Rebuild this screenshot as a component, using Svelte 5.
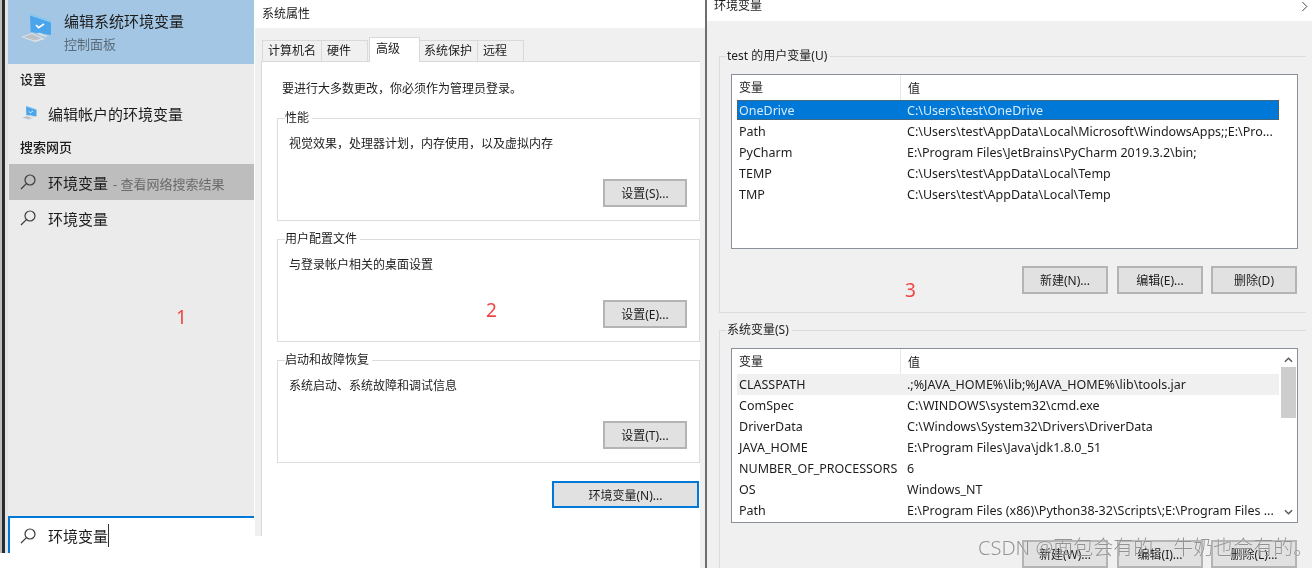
<script>
  const tabs = [
    { label: '计算机名', cls: 'w60' },
    { label: '硬件', cls: 'w46' },
    { label: '高级', cls: 'active' },
    { label: '系统保护', cls: 'w58' },
    { label: '远程', cls: 'w46' }
  ];
  const groups = [
    { title: '性能', text: '视觉效果，处理器计划，内存使用，以及虚拟内存', btn: '设置(S)...' },
    { title: '用户配置文件', text: '与登录帐户相关的桌面设置', btn: '设置(E)...' },
    { title: '启动和故障恢复', text: '系统启动、系统故障和调试信息', btn: '设置(T)...' }
  ];
  const userVars = [
    ['OneDrive', 'C:\\Users\\test\\OneDrive'],
    ['Path', 'C:\\Users\\test\\AppData\\Local\\Microsoft\\WindowsApps;;E:\\Pro...'],
    ['PyCharm', 'E:\\Program Files\\JetBrains\\PyCharm 2019.3.2\\bin;'],
    ['TEMP', 'C:\\Users\\test\\AppData\\Local\\Temp'],
    ['TMP', 'C:\\Users\\test\\AppData\\Local\\Temp']
  ];
  const sysVars = [
    ['CLASSPATH', '.;%JAVA_HOME%\\lib;%JAVA_HOME%\\lib\\tools.jar'],
    ['ComSpec', 'C:\\WINDOWS\\system32\\cmd.exe'],
    ['DriverData', 'C:\\Windows\\System32\\Drivers\\DriverData'],
    ['JAVA_HOME', 'E:\\Program Files\\Java\\jdk1.8.0_51'],
    ['NUMBER_OF_PROCESSORS', '6'],
    ['OS', 'Windows_NT'],
    ['Path', 'E:\\Program Files (x86)\\Python38-32\\Scripts\\;E:\\Program Files ...']
  ];
</script>

{#snippet searchIcon()}
  <svg class="search-icon" viewBox="0 0 16 16" width="16" height="16" fill="none" stroke="#3a3a3a" stroke-width="1.2">
    <circle cx="10" cy="6" r="5" />
    <path d="M6.4 9.6 1 15" />
  </svg>
{/snippet}

{#snippet pcIcon(w, h)}
  <svg viewBox="0 0 32 32" width={w} height={h}>
    <path d="M10 2 31 9v14L10.6 20z" fill="#4aa5ea" />
    <path d="M10 2 31 9v1.5L10 3.5z" fill="#8fcbf5" />
    <path d="M16 13l2.6 2.6L24 12" fill="none" stroke="#fff" stroke-width="1.6" />
    <path d="M17 21l3-.3 7 3 .5 1.5-7-1.5z" fill="#d5dde3" />
    <path d="M1 25l11-4 13 6-10 3z" fill="#dfe3e6" />
    <path d="M3.500 25l8.500-3 9.500 4.500-7 2z" fill="#bcc3c8" />
  </svg>
{/snippet}

{#snippet list(rows, hot, scroll)}
  <div class="list">
    <div class="cols">
      <div class="head">
        <span class="c1">变量</span>
        <span class="c2">值</span>
      </div>
      {#each rows as r, i}
        <div class="row" class:sel={hot === 'sel' && i === 0} class:hover={hot === 'hover' && i === 0}>
          <span class="c1">{r[0]}</span>
          <span class="c2">{r[1]}</span>
        </div>
      {/each}
    </div>
    {#if scroll}
      <div class="scrollbar">
        <svg viewBox="0 0 10 6" width="9" height="6" fill="none" stroke="#555" stroke-width="1.500"><path d="M1 5l4-4 4 4" /></svg>
        <div class="track"><div class="thumb"></div></div>
        <svg viewBox="0 0 10 6" width="9" height="6" fill="none" stroke="#555" stroke-width="1.500"><path d="M1 1l4 4 4-4" /></svg>
      </div>
    {/if}
  </div>
{/snippet}

<div class="app">
  <section class="search-col">
    <div class="edge"></div>
    <div class="search-main">
      <div class="best">
        <div class="best-icon">{@render pcIcon(32, 32)}</div>
        <div class="best-text">
          <div class="best-title">编辑系统环境变量</div>
          <div class="best-sub">控制面板</div>
        </div>
      </div>
      <div class="sec sec-a">设置</div>
      <div class="item item-a">
        <span class="item-icon">{@render pcIcon(16, 16)}</span>
        <span>编辑帐户的环境变量</span>
      </div>
      <div class="sec sec-b">搜索网页</div>
      <div class="item web hot">
        {@render searchIcon()}
        <span>环境变量<em>- 查看网络搜索结果</em></span>
      </div>
      <div class="item web">
        {@render searchIcon()}
        <span>环境变量</span>
      </div>
      <div class="fill"></div>
      <div class="searchbox">
        {@render searchIcon()}
        <span>环境变量</span><i class="caret"></i>
      </div>
    </div>
  </section>

  <section class="sys-col">
    <div class="titlebar sys-title">系统属性</div>
    <div class="sys-body">
      <div class="tabs">
        {#each tabs as t}
          <div class="tab {t.cls}">{t.label}</div>
        {/each}
      </div>
      <div class="tabpanel">
        <p class="notice">要进行大多数更改，你必须作为管理员登录。</p>
        {#each groups as g}
          <fieldset class="grp">
            <legend>{g.title}</legend>
            <p>{g.text}</p>
            <div class="grp-btn"><button>{g.btn}</button></div>
          </fieldset>
        {/each}
        <div class="env-row"><button class="env">环境变量(N)...</button></div>
      </div>
    </div>
    <div class="sys-foot"></div>
  </section>

  <section class="env-col">
    <div class="titlebar env-title">
      <span>环境变量</span>
      <svg viewBox="0 0 6 12" width="6" height="11" fill="none" stroke="#333" stroke-width="1"><path d="M0 1l5 5-5 5" /></svg>
    </div>
    <div class="env-body">
      <fieldset class="box box-user">
        <legend>test 的用户变量(U)</legend>
        {@render list(userVars, 'sel', false)}
        <div class="btns">
          <button>新建(N)...</button><button>编辑(E)...</button><button>删除(D)</button>
        </div>
      </fieldset>
      <fieldset class="box box-sys">
        <legend>系统变量(S)</legend>
        {@render list(sysVars, 'hover', true)}
        <div class="btns">
          <button>新建(W)...</button><button>编辑(I)...</button><button>删除(L)...</button>
        </div>
      </fieldset>
    </div>
  </section>

  <span class="mark m1">1</span>
  <span class="mark m2">2</span>
  <span class="mark m3">3</span>
  <span class="watermark">CSDN @面包会有的，牛奶也会有的。</span>
</div>

<style>
  :global(body) {
    margin: 0;
    background: #fff;
  }
  .app {
    position: relative;
    width: 1312px;
    height: 568px;
    overflow: hidden;
    display: flex;
    background: #fff;
    color: #1c1c1c;
    font-family: "Noto Sans", "Noto Sans CJK SC", sans-serif;
    font-size: 12px;
    filter: blur(0.3px);
  }
  p { margin: 0; }
  button {
    font: inherit;
    color: inherit;
    padding: 0;
    background: #e1e1e1;
    border: 2px solid #b4b4b4;
    box-sizing: border-box;
  }

  /* search panel */
  .search-col {
    flex: 0 0 255px;
    height: 553px;
    display: flex;
  }
  .edge {
    flex: 0 0 8px;
    box-sizing: border-box;
    background: #e4e4e4;
    border-left: 2px solid #bdbdbd;
    box-shadow: inset 3px 0 0 #2b2b2b;
  }
  .search-main {
    flex: 1;
    background: #ebebeb;
    margin-right: 1px;
    display: flex;
    flex-direction: column;
  }
  .best {
    height: 64px;
    flex: none;
    background: #a3c6e4;
    display: flex;
    box-sizing: border-box;
    padding: 12px 0 0 12px;
  }
  .best-icon { width: 44px; }
  .best-title { font-size: 15px; line-height: 18px; }
  .best-sub { font-size: 13px; line-height: 18px; margin-top: 5px; color: #5b6b79; }
  .sec {
    font-size: 13px;
    font-weight: 500;
    padding-left: 12px;
    line-height: 18px;
  }
  .sec-a { margin-top: 6px; }
  .sec-b { margin-top: 7px; }
  .item {
    display: flex;
    align-items: center;
    height: 36px;
    font-size: 15px;
    flex: none;
  }
  .item-a { margin-top: 15px; height: 20px; padding-left: 13px; margin-bottom: 8px; }
  .item-icon { width: 27px; display: flex; }
  .web { padding-left: 12px; gap: 12px; }
  .web.hot { background: #bdbdbd; margin-top: 8px; margin-left: 1px; padding-left: 11px; }
  .web em { font-style: normal; font-size: 13px; color: #6a6a6a; margin-left: 5px; }
  .search-icon { flex: none; }
  .fill { flex: 1; }
  .searchbox {
    flex: none;
    height: 37px;
    box-sizing: border-box;
    background: #fff;
    border-top: 2px solid #0078d7;
    border-left: 2px solid #0078d7;
    padding-left: 10px;
    display: flex;
    align-items: center;
    gap: 12px;
    font-size: 15px;
  }
  .caret {
    width: 1px;
    height: 23px;
    background: #333;
    margin-left: -12px;
  }

  /* system properties */
  .sys-col {
    flex: 0 0 452px;
    box-sizing: border-box;
    height: 568px;
    border-right: 2px solid #6f6f6f;
    display: flex;
    flex-direction: column;
    background: linear-gradient(to left, #f0f0f0 5px, #fff 5px);
  }
  .titlebar { flex: none; background: #fff; }
  .sys-title {
    height: 28px;
    padding: 5px 0 0 7px;
    box-sizing: border-box;
    line-height: 17px;
  }
  .sys-body {
    height: 508px;
    flex: none;
    background: #f0f0f0;
    padding-left: 6px;
    box-sizing: border-box;
    padding-right: 5px;
    display: flex;
    flex-direction: column;
  }
  .tabs {
    height: 33px;
    flex: none;
    display: flex;
    align-items: flex-end;
    padding-left: 1px;
  }
  .tab {
    height: 21px;
    box-sizing: border-box;
    background: #f0f0f0;
    border: 1px solid #d9d9d9;
    border-bottom: 0;
    border-left-width: 0;
    padding-left: 5px;
    line-height: 19px;
  }
  .tab:first-child { border-left-width: 1px; }
  .w60 { width: 60px; }
  .w46 { width: 46px; }
  .w58 { width: 58px; }
  .w58 { padding-left: 4px; }
  .tab.active {
    width: 51px;
    height: 25px;
    background: #fff;
    border-left-width: 1px;
    margin: 0 0 -1px 1px;
    position: relative;
    line-height: 21px;
    padding: 0 0 3px 6px;
  }
  .tabpanel {
    flex: 1;
    background: #fff;
    border: 1px solid #d9d9d9;
    border-bottom: 0;
    border-right: 0;
    padding: 0 0 0 15px;
    box-sizing: border-box;
  }
  .notice {
    padding: 18px 0 0 5px;
    line-height: 17px;
    height: 39px;
    margin-bottom: 17px;
    box-sizing: border-box;
  }
  fieldset {
    margin: 0;
    min-width: 0;
    box-sizing: border-box;
  }
  legend {
    line-height: 16px;
    height: 16px;
    padding: 0 3px 0 0;
  }
  .grp {
    height: 111px;
    padding: 9px 12px 0 11px;
    border: 1px solid #dcdcdc;
    margin: -8px 0 18px;
  }
  .grp legend { margin-left: -4px; }
  .grp p { line-height: 17px; height: 44px; }
  .grp-btn { display: flex; justify-content: flex-end; }
  .grp-btn button { width: 84px; height: 28px; }
  .env-row { display: flex; justify-content: flex-end; margin-top: 18px; }
  .env { width: 147px; height: 27px; border-color: #0078d7; margin-right: 1px; }
  .sys-foot { flex: 1; }

  /* environment variables */
  .env-col {
    flex: 1;
    height: 568px;
    display: flex;
    flex-direction: column;
    background: #f0f0f0;
  }
  .env-title {
    height: 21px;
    display: flex;
    justify-content: space-between;
    padding: 0 4px 0 7px;
    line-height: 11px;
    overflow: hidden;
  }
  .env-title svg { margin-top: 1px; }
  .env-body { padding: 27px 6px 0 12px; }
  .box {
    border: 1px solid #dcdcdc;
    border-right: 0;
    padding: 10px 8px 0 11px;
    margin: 0;
  }
  .box legend { margin-left: -4px; padding-right: 3px; }
  .box-user { height: 265px; margin-bottom: 9px; }
  .box-sys { height: 260px; }
  .list {
    width: 567px;
    height: 175px;
    box-sizing: border-box;
    background: #fff;
    border: 1.5px solid #8a8f9c;
    display: flex;
    overflow: hidden;
  }
  .cols {
    width: 542px;
    margin-left: 5px;
    flex: none;
  }
  .head {
    height: 25px;
    display: flex;
    align-items: center;
  }
  .head .c1 { border-right: 1px solid #e6e6e6; height: 25px; line-height: 25px; }
  .row {
    height: 21px;
    display: flex;
    align-items: center;
    white-space: nowrap;
    font-size: 12.5px;
  }
  .row.sel { height: 20px; margin-bottom: 1px; background: #0078d7; color: #d8ecfb; outline: 1px dotted #7a5a30; outline-offset: -1px; }
  .row.hover { background: #f0f0f0; }
  .c1 { width: 161px; padding-left: 2px; flex: none; overflow: hidden; white-space: nowrap; }
  .c2 { padding-left: 7px; white-space: nowrap; }
  .scrollbar {
    flex: 1;
    display: flex;
    flex-direction: column;
    align-items: center;
    padding: 8px 0 7px;
    box-sizing: border-box;
  }
  .track { flex: 1; width: 100%; padding-top: 4px; display: flex; justify-content: center; }
  .thumb { width: 15px; height: 51px; background: #cdcdcd; }
  .btns {
    width: 566px;
    margin-top: 17px;
    display: flex;
    justify-content: flex-end;
    gap: 8px;
    box-sizing: border-box;
  }
  .btns button { width: 86px; height: 28px; }
  .btns button:first-child { margin-right: 1px; }

  /* overlays */
  .mark {
    position: absolute;
    color: #f04545;
    font-size: 19px;
    line-height: 20px;
  }
  .m1 { left: 176px; top: 307px; }
  .m2 { left: 486px; top: 300px; }
  .m3 { left: 905px; top: 280px; }
  .watermark {
    position: absolute;
    left: 978px;
    top: 535px;
    font-size: 20px;
    line-height: 26px;
    font-weight: 300;
    white-space: nowrap;
    color: rgba(120, 120, 120, 0.8);
    text-shadow: 0 0 1px #fff;
  }
</style>
